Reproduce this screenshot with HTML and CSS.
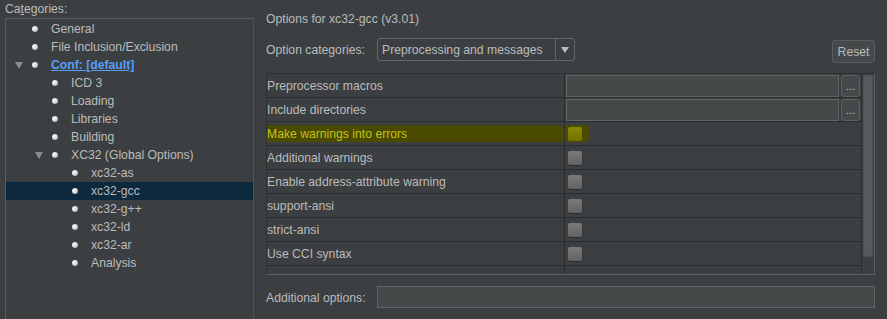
FILE: index.html
```html
<!DOCTYPE html>
<html lang="en">
<head>
  <meta charset="UTF-8">
  <title>Project Properties</title>
  <link rel="stylesheet" href="styles.css">
</head>
<body>
  <div class="window">
    <div class="left">
      <div class="cat-label">Ca<u>t</u>egories:</div>
      <div class="tree">
        <div class="node lvl0"><span class="exp"></span><span class="dot"></span>General</div>
        <div class="node lvl0"><span class="exp"></span><span class="dot"></span>File Inclusion/Exclusion</div>
        <div class="node lvl0"><span class="exp open"></span><span class="dot"></span><span class="conf">Conf: [default]</span></div>
        <div class="node lvl1"><span class="exp"></span><span class="dot"></span>ICD 3</div>
        <div class="node lvl1"><span class="exp"></span><span class="dot"></span>Loading</div>
        <div class="node lvl1"><span class="exp"></span><span class="dot"></span>Libraries</div>
        <div class="node lvl1"><span class="exp"></span><span class="dot"></span>Building</div>
        <div class="node lvl1"><span class="exp open"></span><span class="dot"></span>XC32 (Global Options)</div>
        <div class="node lvl2"><span class="exp"></span><span class="dot"></span>xc32-as</div>
        <div class="node lvl2 selected"><span class="exp"></span><span class="dot"></span>xc32-gcc</div>
        <div class="node lvl2"><span class="exp"></span><span class="dot"></span>xc32-g++</div>
        <div class="node lvl2"><span class="exp"></span><span class="dot"></span>xc32-ld</div>
        <div class="node lvl2"><span class="exp"></span><span class="dot"></span>xc32-ar</div>
        <div class="node lvl2"><span class="exp"></span><span class="dot"></span>Analysis</div>
      </div>
    </div>

    <div class="right">
      <div class="title">Options for xc32-gcc (v3.01)</div>
      <div class="cat-row">
        <span class="cat-text">Option categories:</span>
        <div class="combo">
          <span class="combo-text">Preprocessing and messages</span>
          <span class="combo-arrow"><span class="arrow-down"></span></span>
        </div>
        <button class="reset">Reset</button>
      </div>

      <div class="table">
        <div class="rows">
          <div class="row">
            <div class="name">Preprocessor macros</div>
            <div class="value"><div class="field"></div><button class="dots">...</button></div>
          </div>
          <div class="row">
            <div class="name">Include directories</div>
            <div class="value"><div class="field"></div><button class="dots">...</button></div>
          </div>
          <div class="row marked">
            <div class="name"><span class="mark-text">Make warnings into errors</span></div>
            <div class="value"><span class="check"></span></div>
          </div>
          <div class="row">
            <div class="name">Additional warnings</div>
            <div class="value"><span class="check"></span></div>
          </div>
          <div class="row">
            <div class="name">Enable address-attribute warning</div>
            <div class="value"><span class="check"></span></div>
          </div>
          <div class="row">
            <div class="name">support-ansi</div>
            <div class="value"><span class="check"></span></div>
          </div>
          <div class="row">
            <div class="name">strict-ansi</div>
            <div class="value"><span class="check"></span></div>
          </div>
          <div class="row">
            <div class="name">Use CCI syntax</div>
            <div class="value"><span class="check"></span></div>
          </div>
          <div class="row cut">
            <div class="name"></div>
            <div class="value"><span class="check"></span></div>
          </div>
        </div>
        <div class="vscroll"><div class="thumb"></div></div>
      </div>

      <div class="extra-row">
        <span class="cat-text">Additional options:</span>
        <div class="extra-field"></div>
      </div>
    </div>
  </div>
</body>
</html>
```

FILE: styles.css
```css
html, body {
  margin: 0;
  height: 100%;
  overflow: hidden;
}
body {
  background-color: #3c3f41;
  color: #bbbbbb;
  font-family: "Liberation Sans", Arial, sans-serif;
  font-size: 12.2px;
}
.window {
  display: flex;
  height: 100%;
}

/* left: category tree */
.left {
  width: 249px;
  padding-left: 5px;
  flex: none;
  display: flex;
  flex-direction: column;
}
.cat-label {
  height: 18px;
  line-height: 18px;
}
.cat-label u {
  text-decoration-thickness: 1px;
}
.tree {
  flex: 1;
  padding-top: 1px;
  border: 1px solid #5a5d5f;
  border-bottom: none;
  border-right-color: #515456;
  margin-bottom: -10px;
}
.node {
  height: 18px;
  line-height: 18px;
  display: flex;
  align-items: center;
  white-space: nowrap;
}
.lvl0 { padding-left: 5px; }
.lvl1 { padding-left: 25px; }
.lvl2 { padding-left: 45px; }
.node.selected {
  background-color: #0d293e;
}
.exp {
  width: 16px;
  height: 18px;
  flex: none;
  display: flex;
  align-items: center;
  justify-content: center;
}
.exp.open::before {
  content: "";
  border-left: 4px solid transparent;
  border-right: 4px solid transparent;
  border-top: 7px solid #8c8c8c;
  margin-left: -1px;
}
.dot {
  width: 16px;
  height: 18px;
  flex: none;
  margin-right: 8px;
  display: flex;
  align-items: center;
  justify-content: center;
}
.dot::before {
  content: "";
  width: 6px;
  height: 6px;
  border-radius: 50%;
  background: radial-gradient(circle at 35% 35%, #ffffff 0%, #e0e0e0 40%, #8f8f8f 100%);
  margin-top: -1px;
}
.conf {
  color: #589df6;
  font-weight: bold;
  text-decoration: underline;
}

/* right: options */
.right {
  flex: 1;
  padding-left: 12px;
  padding-right: 12px;
  display: flex;
  flex-direction: column;
}
.title {
  margin-top: 11px;
  height: 16px;
  line-height: 16px;
}
.cat-row {
  display: flex;
  align-items: flex-start;
  margin-top: 11px;
  height: 25px;
}
.cat-text {
  width: 111px;
  line-height: 23px;
  padding-top: 1px;
  flex: none;
}
.combo {
  width: 196px;
  height: 21px;
  border: 1px solid #646464;
  border-radius: 3px;
  display: flex;
  align-items: center;
}
.combo-text {
  flex: 1;
  padding-left: 4px;
}
.combo-arrow {
  width: 18px;
  height: 21px;
  border-left: 1px solid #646464;
  display: flex;
  align-items: center;
  justify-content: center;
}
.arrow-down {
  border-left: 4px solid transparent;
  border-right: 4px solid transparent;
  border-top: 6px solid #bbbbbb;
  margin-top: 1px;
}
.reset {
  margin-left: auto;
  margin-top: 2px;
  width: 43px;
  height: 23px;
  padding: 0;
  background-color: #45494a;
  border: 1px solid #5a5d5f;
  border-radius: 3px;
  color: #bbbbbb;
  font-family: inherit;
  font-size: 12.2px;
}

.table {
  margin-top: 10px;
  height: 200px;
  display: flex;
  border-top: 1px solid #2f3133;
  border-left: 1px solid #2f3133;
  border-right: 1px solid #5e6060;
  border-bottom: 1px solid #5e6060;
  overflow: hidden;
}
.rows {
  flex: 1;
  overflow: hidden;
}
.row {
  height: 23px;
  border-bottom: 1px solid #2b2d2e;
  display: flex;
}
.name {
  width: 297px;
  flex: none;
  line-height: 24px;
  border-right: 1px solid #2b2d2e;
  white-space: nowrap;
}
.value {
  flex: 1;
  display: flex;
  align-items: center;
  padding-left: 1px;
}
.field {
  height: 20px;
  width: 271px;
  background-color: #45494a;
  border: 1px solid #646464;
  margin-top: 1px;
  align-self: flex-start;
}
.dots {
  width: 19px;
  height: 22px;
  margin-left: 2px;
  margin-top: 1px;
  align-self: flex-start;
  padding: 0 0 4px;
  background-color: #45494a;
  border: 1px solid #5e6060;
  border-radius: 3px;
  color: #bbbbbb;
  font-family: inherit;
  font-size: 11px;
  line-height: 1;
  display: flex;
  align-items: flex-end;
  justify-content: center;
}
.check {
  width: 14px;
  height: 14px;
  margin-left: 2px;
  border-radius: 2px;
  background: linear-gradient(#7a7a7a, #626262);
  box-shadow: 0 1px 0 #2b2b2b, 1px 0 0 #333;
}
.row.cut .check {
  margin-top: 16px;
}
.row.marked .name {
  position: relative;
}
.row.marked .name::before {
  content: "";
  position: absolute;
  left: -3px;
  right: 0;
  top: 3px;
  height: 17px;
  background-color: #4a4a00;
  border-radius: 3px 6px 4px 2px;
}
.mark-text {
  position: relative;
  color: #c2c218;
}
.row.marked .value {
  position: relative;
}
.row.marked .value::before {
  content: "";
  position: absolute;
  left: 0;
  top: 3px;
  width: 24px;
  height: 17px;
  background-color: #4a4a00;
  border-radius: 0 4px 4px 0;
}
.row.marked .check {
  position: relative;
  background: linear-gradient(#8a8a00, #707000);
  box-shadow: none;
}
.vscroll {
  width: 12px;
  flex: none;
  border-left: 1px solid #2b2d2e;
}
.thumb {
  margin: 1px 1px 0 1px;
  height: 180px;
  background-color: #575a5c;
  border: 1px solid #4e5154;
  border-radius: 2px;
}

.extra-row {
  display: flex;
  margin-top: 11px;
}
.extra-field {
  flex: 1;
  height: 20px;
  background-color: #45494a;
  border: 1px solid #646464;
}
```
